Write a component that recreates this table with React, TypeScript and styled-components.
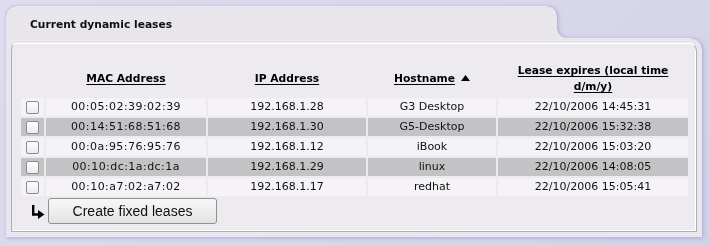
import React from "react";
import styled, { createGlobalStyle } from "styled-components";

const Global = createGlobalStyle`
  html, body { margin: 0; padding: 0; }
  body {
    width: 710px;
    height: 246px;
    overflow: hidden;
    background: linear-gradient(135deg, #dedcee 0%, #d8d6ea 60%, #d4d2e8 100%);
    font-family: "DejaVu Sans", Verdana, sans-serif;
  }
`;

const stripes = `repeating-linear-gradient(180deg, #ebe9ee 0px, #ebe9ee 1px, #e6e4ea 1px, #e6e4ea 2px)`;

const Wrapper = styled.div`
  box-sizing: border-box;
  height: 246px;
  padding: 6px 8px 0 6px;
`;

const Frame = styled.div`
  display: flex;
  flex-direction: column;
  width: 696px;
  filter: drop-shadow(0 0 0.6px rgba(95, 90, 135, 0.75)) drop-shadow(1px 1px 2px rgba(130, 120, 190, 0.5));
`;

const Tab = styled.div`
  position: relative;
  box-sizing: border-box;
  width: 551px;
  height: 32px;
  padding: 12px 0 0 24px;
  border-radius: 10px 10px 0 0;
  background: ${stripes};
  &::after {
    content: "";
    position: absolute;
    left: 100%;
    bottom: 0;
    width: 10px;
    height: 10px;
    background: radial-gradient(circle at 100% 0, transparent 9.5px, #e8e6ec 10px);
  }
`;

const Title = styled.h2`
  margin: 0;
  font-family: "DejaVu Sans", Verdana, sans-serif;
  font-weight: bold;
  font-size: 10.7px;
  line-height: 13px;
  color: #111;
`;

const Body = styled.div`
  box-sizing: border-box;
  height: 199px;
  padding: 5px;
  border-radius: 0 12px 0 0;
  background: ${stripes};
`;

const Inner = styled.div`
  box-sizing: border-box;
  height: 189px;
  padding: 16px 6px 7px 7px;
  border: 1px solid #aeadbc;
  border-top-color: #ffffff;
  border-radius: 6px 8px 0 0;
  box-shadow: inset -1px -1px 0 #ffffff;
  background: repeating-linear-gradient(180deg, #eeecf0 0px, #eeecf0 1px, #ebe9ee 1px, #ebe9ee 2px);
`;

const Table = styled.table`
  width: 671px;
  table-layout: fixed;
  border-collapse: separate;
  border-spacing: 2px;
  font-family: "DejaVu Sans", Verdana, sans-serif;
`;

const Col = styled.col<{ $w: number }>`
  width: ${(p) => p.$w}px;
`;

const HeadCell = styled.th`
  height: 34px;
  padding: 0;
  vertical-align: middle;
  text-align: center;
  font-size: 10.7px;
  line-height: 16px;
  font-weight: bold;
  color: #000;
`;

const SortLink = styled.a`
  color: #000;
  text-decoration: underline;
  text-underline-offset: 2px;
`;

const SortArrow = styled.svg`
  margin-left: 6px;
  vertical-align: 1px;
`;

const Row = styled.tr<{ $alt: boolean }>`
  background: ${(p) => (p.$alt ? "#c3c3c5" : "#f5f3f6")};
`;

const Cell = styled.td<{ $spaced?: boolean }>`
  height: 18px;
  padding: 0;
  text-align: center;
  vertical-align: middle;
  font-size: 11px;
  line-height: 18px;
  color: #111;
  white-space: nowrap;
  letter-spacing: ${(p) => (p.$spaced ? "0.45px" : "0")};
`;

const Check = styled.input`
  appearance: none;
  display: block;
  margin: 0 auto;
  width: 13px;
  height: 13px;
  border: 1px solid #8c8c8c;
  border-radius: 2px;
  background: linear-gradient(180deg, #ffffff, #ececec);
  box-sizing: border-box;
`;

const ButtonRow = styled.div`
  display: flex;
  align-items: center;
  gap: 3px;
  padding-left: 13px;
  height: 26px;
`;

const Button = styled.button`
  box-sizing: border-box;
  width: 169px;
  height: 26px;
  padding: 0;
  border: 1px solid #8f8f8f;
  border-radius: 3px;
  background: linear-gradient(180deg, #f7f7f7 0%, #ececec 60%, #e2e2e2 100%);
  font-family: "Liberation Sans", Arial, sans-serif;
  font-size: 14px;
  color: #111;
`;

const leases = [
  { mac: "00:05:02:39:02:39", ip: "192.168.1.28", host: "G3 Desktop", exp: "22/10/2006 14:45:31" },
  { mac: "00:14:51:68:51:68", ip: "192.168.1.30", host: "G5-Desktop", exp: "22/10/2006 15:32:38" },
  { mac: "00:0a:95:76:95:76", ip: "192.168.1.12", host: "iBook", exp: "22/10/2006 15:03:20" },
  { mac: "00:10:dc:1a:dc:1a", ip: "192.168.1.29", host: "linux", exp: "22/10/2006 14:08:05" },
  { mac: "00:10:a7:02:a7:02", ip: "192.168.1.17", host: "redhat", exp: "22/10/2006 15:05:41" },
];

export default function App() {
  return (
    <>
      <Global />
      <Wrapper>
        <Frame>
          <Tab>
            <Title>Current dynamic leases</Title>
          </Tab>
          <Body>
            <Inner>
              <Table>
                <colgroup>
                  <Col $w={23} />
                  <Col $w={160} />
                  <Col $w={158} />
                  <Col $w={128} />
                  <Col $w={190} />
                </colgroup>
                <thead>
                  <tr>
                    <HeadCell />
                    <HeadCell>
                      <SortLink>MAC Address</SortLink>
                    </HeadCell>
                    <HeadCell>
                      <SortLink>IP Address</SortLink>
                    </HeadCell>
                    <HeadCell>
                      <SortLink>Hostname</SortLink>
                      <SortArrow width="9" height="6" viewBox="0 0 9 6">
                        <path d="M4.5 0 L9 6 L0 6 Z" fill="#000" />
                      </SortArrow>
                    </HeadCell>
                    <HeadCell>
                      <SortLink>
                        Lease expires (local time
                        <br />
                        d/m/y)
                      </SortLink>
                    </HeadCell>
                  </tr>
                </thead>
                <tbody>
                  {leases.map((l, i) => (
                    <Row key={l.mac} $alt={i % 2 === 1}>
                      <Cell>
                        <Check type="checkbox" readOnly />
                      </Cell>
                      <Cell $spaced>{l.mac}</Cell>
                      <Cell>{l.ip}</Cell>
                      <Cell>{l.host}</Cell>
                      <Cell>{l.exp}</Cell>
                    </Row>
                  ))}
                </tbody>
              </Table>
              <ButtonRow>
                <svg width="13" height="15" viewBox="0 0 13 15">
                  <path d="M1.2 1 V10.5 H6.5" stroke="#000" strokeWidth="2.4" fill="none" />
                  <path d="M6 6 L12.5 10.5 L6 15 Z" fill="#000" />
                </svg>
                <Button type="button">Create fixed leases</Button>
              </ButtonRow>
            </Inner>
          </Body>
        </Frame>
      </Wrapper>
    </>
  );
}
